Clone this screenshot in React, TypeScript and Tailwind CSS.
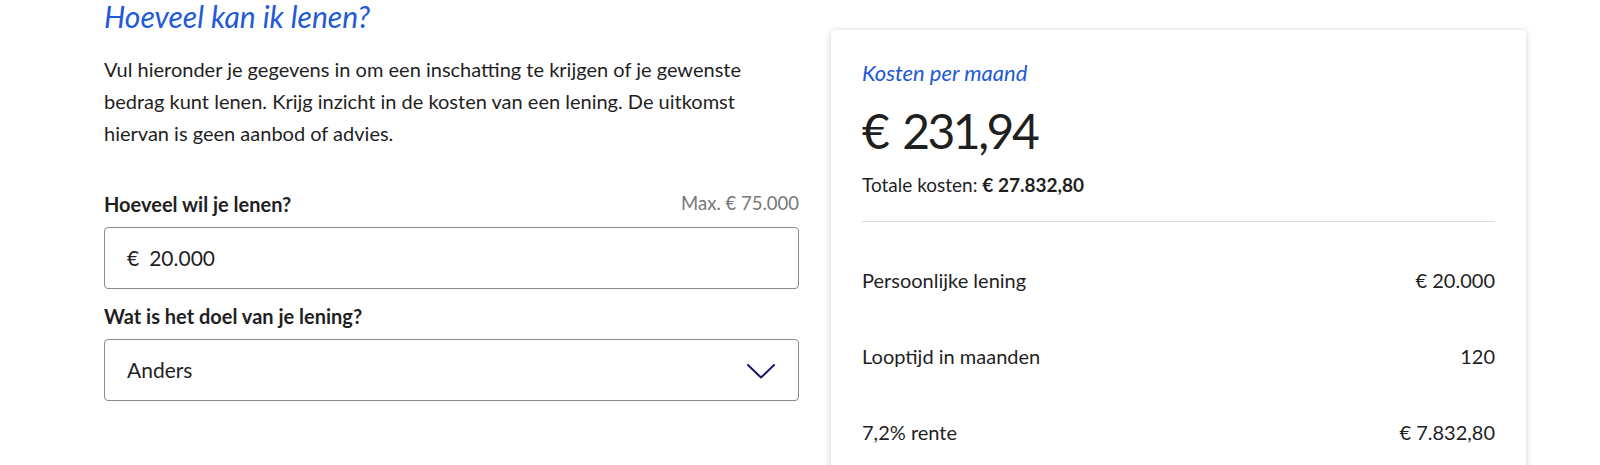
const rows = [
  { label: 'Persoonlijke lening', value: '€ 20.000' },
  { label: 'Looptijd in maanden', value: '120' },
  { label: '7,2% rente', value: '€ 7.832,80' },
]

export default function App() {
  return (
    <div className="h-[465px] overflow-hidden bg-white font-['Lato',sans-serif] text-[#1f1f1f]">
      <div className="flex gap-[32px] pl-[104px]">
        {/* Left: form */}
        <div className="w-[695px] shrink-0">
          <h1 className="pt-[1px] text-[30px] italic leading-[30px] text-[#2259d6]">Hoeveel kan ik lenen?</h1>
          <p className="mt-[22px] max-w-[650px] text-[20px] leading-[32px]">
            Vul hieronder je gegevens in om een inschatting te krijgen of je gewenste bedrag kunt lenen. Krijg
            inzicht in de kosten van een lening. De uitkomst hiervan is geen aanbod of advies.
          </p>

          <div className="mt-[41px] flex h-[28px] items-center justify-between">
            <label className="text-[20px] font-bold">Hoeveel wil je lenen?</label>
            <span className="text-[18.5px] text-[#777]">Max. € 75.000</span>
          </div>
          <div className="mt-[9px] flex h-[62px] items-center rounded-[4px] border border-[#8a8a8a] px-[22px] text-[21px]">
            <span>€</span>
            <span className="ml-[10px]">20.000</span>
          </div>

          <label className="mt-[13px] block h-[28px] text-[20px] font-bold leading-[28px]">
            Wat is het doel van je lening?
          </label>
          <div className="mt-[9px] flex h-[62px] items-center justify-between rounded-[4px] border border-[#8a8a8a] pl-[22px] pr-[23px] text-[21px]">
            <span>Anders</span>
            <svg width="28" height="15" viewBox="0 0 28 15" fill="none" className="mt-[3px]">
              <polyline points="1,1 14,13.5 27,1" stroke="#14196b" strokeWidth="2" strokeLinecap="round" strokeLinejoin="round" />
            </svg>
          </div>
        </div>

        {/* Right: summary card */}
        <div className="mt-[30px] h-[480px] w-[695px] shrink-0 rounded-[4px] bg-white px-[31px] pt-[28px] shadow-[0_1px_7px_rgba(0,0,0,0.2)]">
          <div className="text-[22px] italic leading-[30px] text-[#2259d6]">Kosten per maand</div>
          <div className="mt-[13px] text-[48px] leading-[60px]">
            € <span className="tracking-[-2.5px]">231,94</span>
          </div>
          <div className="mt-[10px] text-[19px] leading-[28px]">
            Totale kosten: <span className="font-bold">€ 27.832,80</span>
          </div>
          <div className="mt-[22px] border-t border-[#ddd]" />
          <div className="pt-[44px]">
            {rows.map((r) => (
              <div key={r.label} className="flex h-[76px] items-start justify-between text-[20px] leading-[28px]">
                <span>{r.label}</span>
                <span>{r.value}</span>
              </div>
            ))}
          </div>
        </div>
      </div>
    </div>
  )
}
